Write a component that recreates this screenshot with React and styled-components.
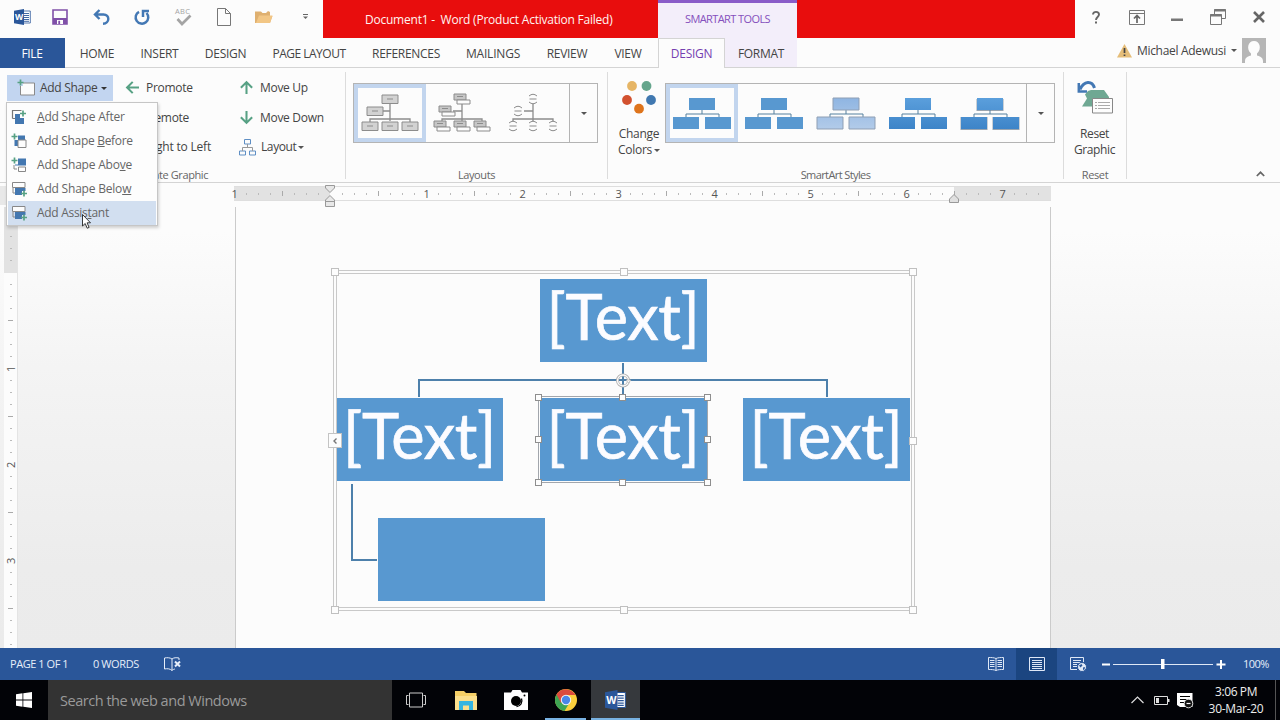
import React from "react";
import styled, { createGlobalStyle } from "styled-components";

const Global = createGlobalStyle`
  * { box-sizing: border-box; }
  body { margin: 0; background: #fcfcfc; overflow: hidden; }
  svg { display: block; flex: none; overflow: visible; }
`;

const Window = styled.div`
  position: relative;
  width: 1280px;
  height: 720px;
  display: flex;
  flex-direction: column;
  background: #fcfcfc;
  color: #444;
  font: 12px/16px "Open Sans", "Noto Sans", sans-serif;
  white-space: pre;
`;

const Label = styled.span`
  letter-spacing: ${(p) => p.$ls ?? -0.3}px;
  color: ${(p) => p.$color || "inherit"};
  font-size: ${(p) => p.$size || 12}px;
`;

/* ---- title bar ---- */
const TitleBar = styled.div`
  display: flex;
  height: 38px;
`;
const QuickAccess = styled.div`
  width: 323px;
  display: flex;
  padding: 0 0 4px 4px;
`;
const QuickSlot = styled.div`
  flex: none;
  width: ${(p) => p.$w || 40.8}px;
  display: flex;
  align-items: center;
  justify-content: center;
`;
const RedStrip = styled.div`
  width: ${(p) => p.$w}px;
  background: #e80d0d;
  color: #fff4f0;
  display: flex;
  align-items: center;
  padding: 1px 0 0 42px;
`;
const ContextTitle = styled.div`
  width: 139px;
  border-top: 3px solid #8a5cc8;
  background: #f3eefa;
  color: #8550bd;
  display: flex;
  align-items: center;
  justify-content: center;
  padding-bottom: 3px;
`;
const WindowButtons = styled.div`
  width: 205px;
  display: flex;
  align-items: center;
  padding: 0 0 4px 1px;
`;
const WindowButton = styled.div`
  width: 40.6px;
  display: flex;
  justify-content: center;
`;

/* ---- tabs ---- */
const TabRow = styled.div`
  display: flex;
  height: 30px;
  border-bottom: 1px solid #d4d4d4;
`;
const Tab = styled.div`
  width: ${(p) => p.$w}px;
  height: ${(p) => (p.$file || p.$active ? 30 : 29)}px;
  padding: ${(p) => (p.$active ? 0 : 2)}px ${(p) => p.$pr || 0}px 0 0;
  display: flex;
  align-items: center;
  justify-content: center;
  background: ${(p) => (p.$file ? "#2a5699" : p.$context ? "#f3eefa" : "#fcfcfc")};
  color: ${(p) => (p.$file ? "#fff" : p.$active ? "#7540b0" : "#444")};
  border: 0 solid #d4d4d4;
  border-width: ${(p) => (p.$active ? "1px 1px 0" : "0")};
`;
const Account = styled.div`
  margin-left: auto;
  display: flex;
  align-items: center;
  gap: 5px;
  padding-right: 14px;
  height: 25px;
`;

/* ---- ribbon ---- */
const Ribbon = styled.div`
  display: flex;
  height: 115px;
  padding-top: 4px;
  border-bottom: 1px solid #d4d4d4;
`;
const Group = styled.div`
  width: ${(p) => p.$w}px;
  height: 107px;
  display: flex;
  flex-direction: column;
  border-right: 1px solid #dcdcdc;
`;
const GroupBody = styled.div`
  flex: none;
  height: 94px;
  display: flex;
  padding-left: ${(p) => p.$pl || 0}px;
`;
const GroupName = styled.div`
  text-align: center;
  line-height: 17px;
  color: #666;
`;
const CommandColumn = styled.div`
  width: ${(p) => p.$w}px;
  padding-top: 1px;
  display: flex;
  flex-direction: column;
`;
const Command = styled.div`
  height: 29.7px;
  display: flex;
  align-items: center;
  padding-left: ${(p) => p.$pl || 0}px;
  gap: ${(p) => p.$gap || 7}px;
`;
const DropButton = styled.div`
  width: 106px;
  height: 26px;
  margin: 2px 0 2px 7px;
  padding: 0 5px 0 11px;
  display: flex;
  align-items: center;
  gap: 4px;
  background: #c2d5f0;
`;
const Caret = styled.i`
  border: 3px solid transparent;
  border-top: 3px solid ${(p) => p.$color || "#555"};
  border-bottom: 0;
  margin-left: ${(p) => p.$ml || 0}px;
`;
const Gallery = styled.div`
  display: flex;
  height: 60px;
  margin-top: 11px;
  border: 1px solid #b4b4b4;
`;
const GalleryItem = styled.div`
  width: ${(p) => p.$w || 71.7}px;
  height: 58px;
  display: flex;
  align-items: center;
  justify-content: center;
  border: 4px solid ${(p) => (p.$selected ? "#c2d5ee" : "transparent")};
`;
const GalleryMore = styled.div`
  width: 28px;
  display: flex;
  align-items: center;
  justify-content: center;
  border-left: 1px solid #b4b4b4;
`;
const BigButton = styled.div`
  width: ${(p) => p.$w}px;
  display: flex;
  flex-direction: column;
  align-items: center;
  padding: 8px 0 0 ${(p) => p.$pl || 0}px;
  & > svg { margin-bottom: 11px; }
`;
const BigLine = styled.div`
  height: 16px;
  display: flex;
  align-items: center;
  gap: 2px;
`;
const Collapse = styled.div`
  margin: auto 15px 5px auto;
`;

/* ---- drop-down menu ---- */
const Menu = styled.div`
  position: absolute;
  left: 6px;
  top: 102px;
  width: 152px;
  height: 124px;
  padding: 2px 1px 1px;
  background: #fdfdfd;
  border: 1px solid #c6c6c6;
  box-shadow: 1px 2px 3px rgba(0, 0, 0, 0.18);
`;
const MenuItem = styled.div`
  height: 24px;
  display: flex;
  align-items: center;
  gap: 9px;
  padding-left: 4px;
  color: #666;
  background: ${(p) => (p.$hover ? "#d2dff0" : "transparent")};
`;
const Pointer = styled.div`
  position: absolute;
  left: 82px;
  top: 214px;
`;

/* ---- rulers and document ---- */
const RulerRow = styled.div`
  height: 24px;
  display: flex;
  padding-top: 3px;
`;
const TabSelector = styled.div`
  width: 8px;
  height: 19px;
  background: #e8e8e8;
`;
const Ruler = styled.div`
  position: relative;
  margin-left: 226px;
  width: 817px;
  height: 15px;
  display: flex;
  border: solid #dedede;
  border-width: 1px 0;
  background: linear-gradient(90deg, #e2e2e2 96px, #fcfcfc 96px 720px, #e2e2e2 720px);
`;
const RulerCell = styled.div`
  flex: none;
  width: 12px;
  margin-left: ${(p) => (p.$first ? -5.4 : 0)}px;
  display: flex;
  align-items: center;
  justify-content: center;
  color: #555;
`;
const Tick = styled.i`
  width: ${(p) => (p.$vertical ? (p.$half ? 5 : 2) : 1)}px;
  height: ${(p) => (p.$vertical ? 1 : p.$half ? 5 : 2)}px;
  background: ${(p) => (p.$half ? "#aaa" : "#bbb")};
`;
const Marker = styled.div`
  position: absolute;
  left: ${(p) => p.$x}px;
  top: ${(p) => p.$y}px;
`;
const Workspace = styled.div`
  height: 441px;
  display: flex;
  padding-left: 4px;
  background: linear-gradient(180deg, #fcfcfc 25px, #f4f4f4 160px, #ececec 360px, #ebebeb);
`;
const VRuler = styled.div`
  width: 14px;
  display: flex;
  flex-direction: column;
  overflow: hidden;
  background: linear-gradient(180deg, #e2e2e2 66px, #fcfcfc 66px);
  border-right: 1px solid #e4e4e4;
`;
const VRulerCell = styled.div`
  flex: none;
  height: 12px;
  margin-top: ${(p) => (p.$first ? -0.5 : 0)}px;
  display: flex;
  align-items: center;
  justify-content: center;
  color: #555;
  & > span { transform: rotate(-90deg); line-height: 12px; }
`;
const Page = styled.div`
  position: relative;
  margin-left: 217px;
  width: 816px;
  background: #fcfcfc;
  border: solid #cbcbcb;
  border-width: 0 1px;
`;
/* The drawing canvas uses window coordinates for its children. */
const Canvas = styled.div`
  position: absolute;
  left: -236px;
  top: -207px;
  width: 1280px;
  height: 648px;
`;
const Frame = styled.div`
  position: absolute;
  left: 333px;
  top: 270px;
  width: 582px;
  height: 341px;
  border: 4px double #c9c9c9;
`;
const Node = styled.div`
  position: absolute;
  left: ${(p) => p.$x}px;
  top: ${(p) => p.$y}px;
  width: ${(p) => p.$w || 167}px;
  height: 83px;
  display: flex;
  align-items: center;
  justify-content: center;
  padding: 0 1px 9px 0;
  background: #5898d0;
  color: #fcfcff;
  font: 63px/74px Lato, sans-serif;
  letter-spacing: -0.3px;
  -webkit-text-stroke: 0.7px #fcfcff;
`;
const Selection = styled.div`
  position: absolute;
  left: 538px;
  top: 396px;
  width: 170px;
  height: 87px;
  border: 1px solid #a2a6ac;
`;
const Handle = styled.div`
  position: absolute;
  left: ${(p) => p.$x - 4}px;
  top: ${(p) => p.$y - 4}px;
  width: ${(p) => p.$s || 7}px;
  height: ${(p) => p.$s || 7}px;
  background: #fdfdfd;
  border: 1px solid ${(p) => p.$c || "#b4b4b4"};
`;
const PaneToggle = styled.div`
  position: absolute;
  left: 328px;
  top: 433px;
  width: 14px;
  height: 15px;
  display: flex;
  align-items: center;
  justify-content: center;
  background: #fdfdfd;
  border: 1px solid #c4c4c4;
`;
const Lines = styled.svg`
  position: absolute;
  left: 0;
  top: 0;
`;

/* ---- status bar ---- */
const StatusBar = styled.div`
  height: 32px;
  display: flex;
  align-items: center;
  background: #2a5699;
  color: #e6eefa;
  padding-left: 10px;
`;
const StatusText = styled.div`
  width: ${(p) => p.$w}px;
`;
const StatusRight = styled.div`
  margin-left: auto;
  display: flex;
  align-items: center;
  height: 32px;
`;
const ViewButton = styled.div`
  width: 41px;
  height: 32px;
  display: flex;
  align-items: center;
  justify-content: center;
  padding-left: 1px;
  background: ${(p) => (p.$active ? "#1b4580" : "transparent")};
`;
const ZoomText = styled.div`
  width: 54px;
  padding-left: 17px;
`;

/* ---- taskbar ---- */
const Taskbar = styled.div`
  height: 40px;
  display: flex;
  background: #020307;
`;
const TaskButton = styled.div`
  width: ${(p) => p.$w || 49.5}px;
  display: flex;
  align-items: center;
  justify-content: center;
  background: ${(p) => (p.$active ? "#36393d" : "transparent")};
  box-shadow: ${(p) => (p.$open ? "inset 0 -2px #78b2e2" : "none")};
  margin: 0 ${(p) => p.$m || 0}px;
`;
const Search = styled.div`
  width: 344px;
  display: flex;
  align-items: center;
  padding: 2px 0 0 12px;
  background: #333;
  color: #9a9a9a;
`;
const Tray = styled.div`
  margin-left: auto;
  display: flex;
  align-items: center;
  color: #eee;
`;
const Clock = styled.div`
  width: 75px;
  margin-left: 6px;
  padding-right: 3px;
  display: flex;
  flex-direction: column;
  align-items: center;
  line-height: 17px;
`;
const ShowDesktop = styled.div`
  width: 5px;
  height: 40px;
  border-left: 1px solid #555;
`;

/* ---- drawings ---- */
const WordLogo = ({ s = 1 }) => (
  <svg width={17 * s} height={16 * s} viewBox="0 0 17 16">
    <path d="M9 2h7.3v12H9z" fill="#fff" stroke="#2b579a" strokeWidth=".8" />
    <path d="M10 4.5h5M10 6.5h5M10 8.5h5M10 10.5h5M10 12.3h5" stroke="#2b579a" strokeWidth=".9" />
    <path d="M0 1.8 10 0v16L0 14.2z" fill="#2b579a" />
    <text x="1" y="11.2" fontSize="8.5" fontWeight="700" fill="#fff" fontFamily="Open Sans">W</text>
  </svg>
);
const SaveIcon = () => (
  <svg width="16" height="16" viewBox="0 0 16 16">
    <path d="M1 1h14v14H1z" fill="#fcfcfc" stroke="#8050a8" strokeWidth="1.6" />
    <path d="M1 9h14v6H1z" fill="#8050a8" />
    <path d="M5 11h6v4H5z" fill="#fcfcfc" />
    <path d="M6.3 11.8h1.8V15H6.3z" fill="#8050a8" />
  </svg>
);
const UndoIcon = () => (
  <svg width="17" height="16" viewBox="0 0 17 16" fill="none" stroke="#4378b4" strokeWidth="2.4">
    <path d="M6.5 1 2 5.5 6.5 10M2 5.5h8.5c6.5 0 6.5 9-.5 9.300" />
  </svg>
);
const RedoIcon = () => (
  <svg width="16" height="16" viewBox="0 0 16 16" fill="none" stroke="#4378b4" strokeWidth="2.5">
    <path d="M5 2.800A6.300 6.300 0 1 0 12.500 4M9 8V2h6" />
  </svg>
);
const SpellIcon = () => (
  <svg width="18" height="20" viewBox="0 0 18 20">
    <text x="1" y="6.500" fontSize="7.5" fill="#a4a4a4" fontFamily="Open Sans" textLength="15">ABC</text>
    <path d="m3.500 12 4.500 5 8.500-8.500" fill="none" stroke="#a4a4a4" strokeWidth="2.700" />
  </svg>
);
const NewIcon = () => (
  <svg width="14" height="18" viewBox="0 0 14 18" fill="none" stroke="#777" strokeWidth="1">
    <path d="M.5.5h8l5 5v12H.5zM8.500.5v5h5" />
  </svg>
);
const OpenIcon = () => (
  <svg width="18" height="14" viewBox="0 0 18 14">
    <path d="M0 13V1.500h6L7.500 3H11l2-2 2 1v4h2.500L15 13z" fill="#dfb070" />
    <path d="m1 13 3-7.500h13.500L15 13z" fill="#f2c685" />
  </svg>
);
const Arrow = ({ r = 0 }) => (
  <svg width="13" height="13" viewBox="0 0 12 12" fill="none" stroke="#57a184" strokeWidth="1.900">
    <path transform={`rotate(${r} 6 6)`} d="M6.200.8 1 6l5.200 5.200M1 6h11" />
  </svg>
);
const Plus = ({ x, y }) => <path d={`M${x - 3} ${y}h6M${x} ${y - 3}v6`} stroke="#57a184" strokeWidth="1.700" />;
const AddShapeIcon = () => (
  <svg width="18" height="16" viewBox="0 0 18 16">
    <path d="M2.500 3h14v12h-14z" fill="#fcfcfc" stroke="#8a8a8a" />
    <path d="M0 0h5v6H0z" fill="#c2d5f0" />
    <Plus x={2.500} y={2.500} />
  </svg>
);
const LayoutIcon = () => (
  <svg width="17" height="17" viewBox="0 0 17 17" fill="none" stroke="#5f8fc4">
    <path d="M5.500.5h6v4.500h-6zM.5 12h6v4h-6zM10.500 12h6v4h-6z" />
    <path d="M8.500 5v3.500M3.500 12V8.500h10V12" stroke="#999" />
  </svg>
);
const menuIcons = {
  after: (
    <>
      <path d="M.5 8.500V.5h9" fill="none" stroke="#777" strokeWidth="1.200" />
      <path d="M.5 8.500h3" stroke="#777" />
      <path d="M3 4h5v4h4v6H3z" fill="#4377b0" />
      <Plus x={11} y={3.500} />
    </>
  ),
  before: (
    <>
      <path d="M6 1.500h7V6H7v6H2.500V6H6z" fill="#4377b0" />
      <path d="M6 6h8v7.500H6z" fill="#fdfdfd" stroke="#888" />
      <Plus x={2.500} y={2.500} />
    </>
  ),
  above: (
    <>
      <path d="M6 .5h8v7H3V6.500h3z" fill="#4377b0" />
      <path d="M6.500 9h7v4.500h-7z" fill="#fdfdfd" stroke="#888" />
      <path d="M2 7v4h3" fill="none" stroke="#888" />
      <Plus x={2.500} y={2.500} />
    </>
  ),
  below: (
    <>
      <path d="M.5.5h12.500v5H.5z" fill="#fdfdfd" stroke="#888" />
      <path d="M1 6v5h2" fill="none" stroke="#888" />
      <path d="M3 6h10.500v3H10v4H3z" fill="#4377b0" />
      <Plus x={12} y={11.500} />
    </>
  ),
};
const MenuIcon = ({ kind }) => (
  <svg width="16" height="15" viewBox="0 0 16 15">{menuIcons[kind]}</svg>
);

const LayoutThumb = ({ kind }) => {
  const boxes = [[29, 5], [14, 17], [9, 32], [29, 32], [49, 32]];
  return (
    <svg width="58" height="38" viewBox="0 0 58 38" stroke="#8c8c8c" fill="none">
      <path d="M29 9v18M20 17h9M9 29v-4h40v4" strokeWidth="1.300" />
      {boxes.map(([x, y], i) => {
        if (kind === 0)
          return (
            <g key={i}>
              <path d={`M${x - 8} ${y - 4}h16v8.500h-16z`} fill="#d2d2d2" />
              <path d={`M${x - 3} ${y}h6`} />
            </g>
          );
        if (kind === 1)
          return (
            <g key={i}>
              <path d={`M${x - 8} ${y - 5}h12v6h-12z`} fill="#c6c6c6" />
              <path d={`M${x - 5} ${y - 2.500}h6`} />
              <path d={`M${x - 5} ${y + 1}h13v4h-13z`} fill="#fcfcfc" />
            </g>
          );
        return (
          <g key={i}>
            <circle cx={x} cy={y} r="5" fill="#fcfcfc" stroke="none" />
            <path d={`M${x - 4} ${y - 3}q4-3.500 8 0M${x - 4} ${y + 3}q4 3.500 8 0M${x - 3.500} ${y}h7`} />
          </g>
        );
      })}
    </svg>
  );
};

const StyleThumb = ({ kind }) => {
  const fill = kind === 2 ? "url(#pale)" : kind > 2 ? "url(#deep)" : "#5898d0";
  return (
    <svg width="60" height="34" viewBox="0 0 60 34">
      <defs>
        <linearGradient id="pale" x2="0" y2="1"><stop stopColor="#8fb5e2" /><stop offset="1" stopColor="#b2cbe9" /></linearGradient>
        <linearGradient id="deep" x2="0" y2="1"><stop stopColor="#5b9fdc" /><stop offset="1" stopColor="#3d84c8" /></linearGradient>
      </defs>
      {kind === 4 && <path d="M16.500 3h27v12h-27zM.5 21h27v13H.5zM32.500 21h27v13h-27z" fill="#98a4b0" />}
      <path d="M30 14v4M14 21v-3h33v3" fill="none" stroke="#55809f" />
      <path
        d="M17 2h26v12H17zM1 21h26v12H1zM33 21h26v12H33z"
        fill={fill}
        stroke={kind === 2 ? "#8f9fb4" : "none"}
      />
    </svg>
  );
};

const ColorDots = () => (
  <svg width="36" height="35" viewBox="0 0 36 35">
    <circle cx="11" cy="6" r="4.900" fill="#e6b565" />
    <circle cx="25.500" cy="6" r="4.900" fill="#65a58c" />
    <circle cx="6" cy="20" r="4.900" fill="#d2512f" />
    <circle cx="30" cy="20" r="4.900" fill="#4078b0" />
    <circle cx="18" cy="28.700" r="4.900" fill="#de741c" />
  </svg>
);
const ResetIcon = () => (
  <svg width="36" height="35" viewBox="0 0 36 35">
    <path d="m11 11 3-1h13l5 7v3H16v6.500H5l5-8-2-4z" fill="#6fa893" />
    <path d="M15.500 18.500h20v14.500h-20z" fill="#fdfdfd" stroke="#888" />
    <path d="M18 22.500h2m1 0h12M18 25.500h2m1 0h12M18 28.500h2m1 0h12" stroke="#aaa" />
    <path d="M3 9.500C7 .500 15 .500 17.500 8" fill="none" stroke="#4378b4" strokeWidth="3" />
    <path d="M1.800 3v8.500H10" fill="none" stroke="#4378b4" strokeWidth="2.500" />
  </svg>
);

const tabs = [
  ["HOME", 64], ["INSERT", 61], ["DESIGN", 71], ["PAGE LAYOUT", 97, -0.5, 1],
  ["REFERENCES", 96], ["MAILINGS", 79, -0.2, 1], ["REVIEW", 69, -0.3, 1], ["VIEW", 56, -0.3, 4],
];

const horizontal = Array.from({ length: 68 }, (_, i) => i);
const vertical = Array.from({ length: 37 }, (_, i) => i);

export default function App() {
  return (
    <Window>
      <Global />
      <TitleBar>
        <QuickAccess>
          <QuickSlot $w={36}><WordLogo /></QuickSlot>
          <QuickSlot><SaveIcon /></QuickSlot>
          <QuickSlot><UndoIcon /></QuickSlot>
          <QuickSlot><RedoIcon /></QuickSlot>
          <QuickSlot><SpellIcon /></QuickSlot>
          <QuickSlot><NewIcon /></QuickSlot>
          <QuickSlot><OpenIcon /></QuickSlot>
          <QuickSlot>
            <svg width="5" height="6" viewBox="0 0 5 6"><path d="M0 .5h5" stroke="#666" /><path d="M0 2.500h5L2.500 5z" fill="#666" /></svg>
          </QuickSlot>
        </QuickAccess>
        <RedStrip $w={335}><Label $ls={-0.23}>Document1 -  Word (Product Activation Failed)</Label></RedStrip>
        <ContextTitle><Label $size={11} $ls={-0.6}>SMARTART TOOLS</Label></ContextTitle>
        <RedStrip $w={278} />
        <WindowButtons>
          <WindowButton>
            <svg width="8" height="13" viewBox="0 0 8 13"><path d="M1 3.500C1 0 7 0 7 3.500 7 6 4 6 4 9" fill="none" stroke="#666" strokeWidth="1.900" /><path d="M3 10.500h2v2H3z" fill="#666" /></svg>
          </WindowButton>
          <WindowButton>
            <svg width="16" height="15" viewBox="0 0 16 15" fill="none" stroke="#777"><path d="M.5.5h15v14H.5zM.5 3.500h15" /><path d="M8 13V6M5 8.500l3-3 3 3" stroke="#666" strokeWidth="1.700" /></svg>
          </WindowButton>
          <WindowButton>
            <svg width="12" height="14" viewBox="0 0 12 14"><path d="M0 8.500h12V11H0z" fill="#777" /></svg>
          </WindowButton>
          <WindowButton>
            <svg width="16" height="16" viewBox="0 0 16 16" fill="none" stroke="#777"><path d="M4.500 5V.5h11v9h-4M.5 5.500h11v10H.5z" /><path d="M4 1.500h12M0 6.500h12" strokeWidth="2" /></svg>
          </WindowButton>
          <WindowButton>
            <svg width="12" height="12" viewBox="0 0 12 12"><path d="m1 1 10 10M11 1 1 11" stroke="#666" strokeWidth="2.600" /></svg>
          </WindowButton>
        </WindowButtons>
      </TitleBar>

      <TabRow>
        <Tab $w={65} $file $pr={1}><Label $ls={-0.4}>FILE</Label></Tab>
        {tabs.map(([t, w, ls, pr]) => <Tab key={t} $w={w} $pr={pr}><Label $ls={ls}>{t}</Label></Tab>)}
        <Tab $w={67} $active><Label>DESIGN</Label></Tab>
        <Tab $w={72} $context><Label>FORMAT</Label></Tab>
        <Account>
          <svg width="15" height="14" viewBox="0 0 15 14"><path d="M7.500 0 15 13.500H0z" fill="#e5bd78" /><path d="M7.500 4v5M7.500 10.500v1.500" stroke="#444" strokeWidth="1.700" /></svg>
          <Label $ls={-0.3}>Michael Adewusi</Label>
          <Caret />
          <svg width="24" height="25" viewBox="0 0 24 25"><path d="M0 0h24v25H0z" fill="#b6b6b6" /><path d="M3 25v-2c0-4 4-5 6-5.500v-2C4 11 6 3 12 3s8 8 3 12.500v2c2 .5 6 1.500 6 5.500v2z" fill="#fcfcfc" /></svg>
        </Account>
      </TabRow>

      <Ribbon>
        <Group $w={346}>
          <GroupBody>
            <CommandColumn $w={119}>
              <DropButton><AddShapeIcon /><Label>Add Shape</Label><Caret $color="#333" /></DropButton>
            </CommandColumn>
            <CommandColumn $w={120}>
              <Command $pl={7} $gap={7}><Arrow /><Label>Promote</Label></Command>
              <Command $pl={7} $gap={7}><Arrow r={180} /><Label>Demote</Label></Command>
              <Command $pl={7} $gap={7}><Arrow /><Label $ls={-0.2}>Right to Left</Label></Command>
            </CommandColumn>
            <CommandColumn $w={105}>
              <Command $pl={0.5} $gap={7.5}><Arrow r={90} /><Label>Move Up</Label></Command>
              <Command $pl={0.5} $gap={7.5}><Arrow r={-90} /><Label>Move Down</Label></Command>
              <Command $gap={5}><LayoutIcon /><Label $ls={-0.4}>Layout</Label><Caret $ml={-3} /></Command>
            </CommandColumn>
          </GroupBody>
          <GroupName><Label $size={11} $ls={-0.4}>Create Graphic</Label></GroupName>
        </Group>

        <Group $w={262}>
          <GroupBody $pl={7}>
            <Gallery>
              {[0, 1, 2].map((k) => <GalleryItem key={k} $selected={k === 0}><LayoutThumb kind={k} /></GalleryItem>)}
              <GalleryMore><Caret /></GalleryMore>
            </Gallery>
          </GroupBody>
          <GroupName><Label $size={11} $ls={-0.4}>Layouts</Label></GroupName>
        </Group>

        <Group $w={456}>
          <GroupBody>
            <BigButton $w={57} $pl={5}>
              <ColorDots />
              <BigLine><Label>Change</Label></BigLine>
              <BigLine><Label>Colors</Label><Caret /></BigLine>
            </BigButton>
            <Gallery>
              {[0, 1, 2, 3, 4].map((k) => <GalleryItem key={k} $w={72} $selected={k === 0}><StyleThumb kind={k} /></GalleryItem>)}
              <GalleryMore><Caret /></GalleryMore>
            </Gallery>
          </GroupBody>
          <GroupName><Label $size={11} $ls={-0.6}>SmartArt Styles</Label></GroupName>
        </Group>

        <Group $w={63}>
          <GroupBody>
            <BigButton $w={61}>
              <ResetIcon />
              <BigLine><Label $ls={-0.4}>Reset</Label></BigLine>
              <BigLine><Label $ls={-0.4}>Graphic</Label></BigLine>
            </BigButton>
          </GroupBody>
          <GroupName><Label $size={11} $ls={-0.4}>Reset</Label></GroupName>
        </Group>
        <Collapse>
          <svg width="9" height="6" viewBox="0 0 9 6"><path d="m.8 5 3.700-3.700L8.200 5" fill="none" stroke="#666" strokeWidth="1.700" /></svg>
        </Collapse>
      </Ribbon>

      <RulerRow>
        <TabSelector />
        <Ruler>
          {horizontal.map((i) => {
            const inch = i / 8 - 1;
            const whole = i % 8 === 0;
            return (
              <RulerCell key={i} $first={i === 0}>
                {whole ? inch !== 0 && <Label $size={11}>{Math.abs(inch)}</Label> : <Tick $half={i % 4 === 0} />}
              </RulerCell>
            );
          })}
          <Marker $x={91} $y={-2}>
            <svg width="10" height="22" viewBox="0 0 10 22" fill="#e8e8e8" stroke="#999"><path d="M.5.5h9v2.500L5 7.500.5 3zM5 10.500 9.500 15v6.500h-9V15zM.5 16.500h9" /></svg>
          </Marker>
          <Marker $x={715} $y={7}>
            <svg width="10" height="9" viewBox="0 0 10 9" fill="#e0e0e0" stroke="#999"><path d="M5 .5 9.500 5v3.500h-9V5z" /></svg>
          </Marker>
        </Ruler>
      </RulerRow>

      <Workspace>
        <VRuler>
          {vertical.map((i) => {
            const n = i - 5;
            return (
              <VRulerCell key={i} $first={i === 0}>
                {n % 8 === 0 && n > 0 ? <Label $size={11}>{n / 8}</Label> : n !== 0 && <Tick $vertical $half={n % 4 === 0} />}
              </VRulerCell>
            );
          })}
        </VRuler>
        <Page>
          <Canvas>
            <Frame />
            <Lines width="1280" height="648" fill="none" stroke="#4d80ab" strokeWidth="2">
              <path d="M623 363v34M419 397v-17h408v17M352 484v76h25" />
            </Lines>
            <Node $x={540} $y={279}>[Text]</Node>
            <Node $x={337} $y={398.400} $w={166}>[Text]</Node>
            <Node $x={540} $y={398.400}>[Text]</Node>
            <Node $x={743} $y={398.400}>[Text]</Node>
            <Node $x={378} $y={518} />
            <Selection />
            {[[335, 272], [624, 272], [913, 272], [913, 441], [335, 610], [624, 610], [913, 610]].map(([x, y]) => (
              <Handle key={`${x}-${y}`} $x={x} $y={y} $s={8} $c="#c0c0c0" />
            ))}
            {[[539, 398], [623, 398], [708, 398], [539, 440], [708, 440], [539, 483], [623, 483], [708, 483]].map(([x, y]) => (
              <Handle key={`${x}-${y}`} $x={x} $y={y} $c="#8e8e8e" />
            ))}
            <Lines width="1280" height="648" fill="none">
              <circle cx="623" cy="380.500" r="5.500" stroke="#b0b0b0" strokeWidth="3" />
              <circle cx="623" cy="380.500" r="5.500" stroke="#fafafa" strokeWidth="1.300" />
              <path d="M626 380h5l-2.500 3z" fill="#fafafa" stroke="#aaa" strokeWidth=".6" />
            </Lines>
            <PaneToggle>
              <svg width="4" height="6" viewBox="0 0 4 6"><path d="M3.500.5 1 3l2.500 2.500" fill="none" stroke="#777" strokeWidth="1.400" /></svg>
            </PaneToggle>
          </Canvas>
        </Page>
      </Workspace>

      <StatusBar>
        <StatusText $w={83}><Label $size={11} $ls={-0.45}>PAGE 1 OF 1</Label></StatusText>
        <StatusText $w={71}><Label $size={11} $ls={-0.4}>0 WORDS</Label></StatusText>
        <svg width="17" height="15" viewBox="0 0 17 15" fill="none" stroke="#e6eefa"><path d="M8 13.500V2C6 .5 3 .5.5 1v11c2.500-.5 5.500-.5 7.500 1.500 1-1 2-1.300 3-1.500M8 2c2-1.500 4-1.500 7-1v2" /><path d="m11 4.500 5 5M16 4.500l-5 5" strokeWidth="2" /></svg>
        <StatusRight>
          <ViewButton>
            <svg width="16" height="14" viewBox="0 0 16 14" fill="none" stroke="#dfe8f6"><path d="M8 1.500C6 .5 3 .5.5.5v12c3 0 5.500 0 7.500 1 2-1 4.500-1 7.500-1V.5c-2.500 0-5.500 0-7.500 1zv12M2 3.500h4.500M2 5.500h4.500M2 7.500h4.500M2 9.500h4.500M9.500 3.500H14M9.500 5.500H14M9.500 7.500H14M9.500 9.500H14" /></svg>
          </ViewButton>
          <ViewButton $active>
            <svg width="16" height="14" viewBox="0 0 16 14" fill="none" stroke="#dfe8f6"><path d="M.5.5h15v13H.5zM3 3.500h10M3 5.500h10M3 7.500h10M3 9.500h10M3 11.500h10" /></svg>
          </ViewButton>
          <ViewButton>
            <svg width="17" height="16" viewBox="0 0 17 16" fill="none" stroke="#dfe8f6"><path d="M7 13.500H.5V1.500h13V6M3 4.500h8M3 6.500h7M3 8.500h4M3 10.500h4" /><circle cx="12" cy="11" r="4.500" fill="#dfe8f6" stroke="#2a5699" /><path d="M9 9.500l2.500-1.500 1 1.500-2 2zM13 11.500l2-.5-.5 2.500-1.500.5z" fill="#2a5699" stroke="none" /></svg>
          </ViewButton>
          <svg width="128" height="12" viewBox="0 0 128 12" stroke="#fff">
            <path d="M4 6.500h8M118.500 6.500h9M123 2v9" strokeWidth="2" />
            <path d="M15 6.500h100" strokeWidth="1" stroke="#dfe8f6" />
            <path d="M63 1h3.500v10H63z" fill="#fff" stroke="none" />
          </svg>
          <ZoomText><Label $size={11} $ls={-0.5}>100%</Label></ZoomText>
        </StatusRight>
      </StatusBar>

      <Taskbar>
        <TaskButton $w={48}>
          <svg width="16" height="16" viewBox="0 0 16 16" fill="#fff"><path d="m0 2.200 6.500-.9v6.200H0zM7.300 1.200 16 0v7.500H7.300zM0 8.400h6.500v6.300L0 13.800zM7.300 8.400H16V16l-8.700-1.200z" /></svg>
        </TaskButton>
        <Search><Label $size={14.5} $ls={-0.47}>Search the web and Windows</Label></Search>
        <TaskButton $w={48}>
          <svg width="20" height="16" viewBox="0 0 20 16" fill="none" stroke="#ccc"><path d="M3.500 1h13v14h-13zM2.500 3.500h-2v9h2M17.500 3.500h2v9h-2" /></svg>
        </TaskButton>
        <TaskButton $w={52}>
          <svg width="22" height="19" viewBox="0 0 22 19"><path d="M0 0h9l2 2h10.500v17H0z" fill="#f5cf66" /><path d="M0 5h22v14H0z" fill="#fbdf8c" /><path d="M4 19v-9h14v9h-4v-4.500H8V19z" fill="#35b5e0" /></svg>
        </TaskButton>
        <TaskButton $w={48}>
          <svg width="24" height="20" viewBox="0 0 24 20"><path d="M0 2.500h7L8.500 0h8L18 2.500h6V20H0z" fill="#fff" /><circle cx="12" cy="11" r="5" fill="#000" /><path d="M17.500 8.500c1.500 4-1 8-5 8" fill="none" stroke="#000" strokeWidth="1.300" /><circle cx="20.500" cy="5.500" r="1" fill="#000" /></svg>
        </TaskButton>
        <TaskButton $open $w={41} $m={5}>
          <svg width="22" height="22" viewBox="0 0 22 22"><circle cx="11" cy="11" r="11" fill="#fbcf3c" /><path d="M11 11 1.500 5.500A11 11 0 0 0 9.500 22L15 13z" fill="#3ea553" /><path d="M1.500 5.500A11 11 0 0 1 20.500 6H11l-5 8z" fill="#dc4a3d" /><circle cx="11" cy="11" r="5.200" fill="#f4f4f4" /><circle cx="11" cy="11" r="4.200" fill="#4a86e8" /></svg>
        </TaskButton>
        <TaskButton $open $active $w={49}><WordLogo s={1.25} /></TaskButton>
        <Tray>
          <svg width="56" height="18" viewBox="0 0 56 18" fill="none" stroke="#ddd">
            <path d="m10.500 12 6-6 6 6" strokeWidth="1.200" />
            <path d="M33.500 5.500h13v8h-13z" /><path d="M35 7h3v5h-3zM47 8h1.500v3H47z" fill="#ddd" stroke="none" />
          </svg>
          <svg width="17" height="17" viewBox="0 0 17 17"><path d="M0 1h15.500v14H3l-3-2z" fill="#fff" /><path d="M3 4.500h10M3 7.500h8M3 10.500h4" stroke="#000" strokeWidth="1.200" /><circle cx="11.500" cy="11.500" r="4.300" fill="#111" stroke="#ddd" /><path d="M9.500 11.500h4" stroke="#fff" strokeWidth="1.200" /></svg>
          <Clock><Label $ls={-0.4}>3:06 PM</Label><Label $ls={-0.3}>30-Mar-20</Label></Clock>
          <ShowDesktop />
        </Tray>
      </Taskbar>

      <Menu>
        <MenuItem><MenuIcon kind="after" /><Label $ls={-0.2}><u>A</u>dd Shape After</Label></MenuItem>
        <MenuItem><MenuIcon kind="before" /><Label>Add Shape <u>B</u>efore</Label></MenuItem>
        <MenuItem><MenuIcon kind="above" /><Label $ls={-0.2}>Add Shape Abo<u>v</u>e</Label></MenuItem>
        <MenuItem><MenuIcon kind="below" /><Label $ls={-0.2}>Add Shape Belo<u>w</u></Label></MenuItem>
        <MenuItem $hover><MenuIcon kind="below" /><Label>Add Assis<u>t</u>ant</Label></MenuItem>
      </Menu>
      <Pointer>
        <svg width="9" height="15" viewBox="0 0 9 15"><path d="M.5.5v11.500l2.700-2.500 2 4.700 1.900-.8-2-4.600h3.400z" fill="#fff" stroke="#222" strokeWidth=".9" /></svg>
      </Pointer>
    </Window>
  );
}
